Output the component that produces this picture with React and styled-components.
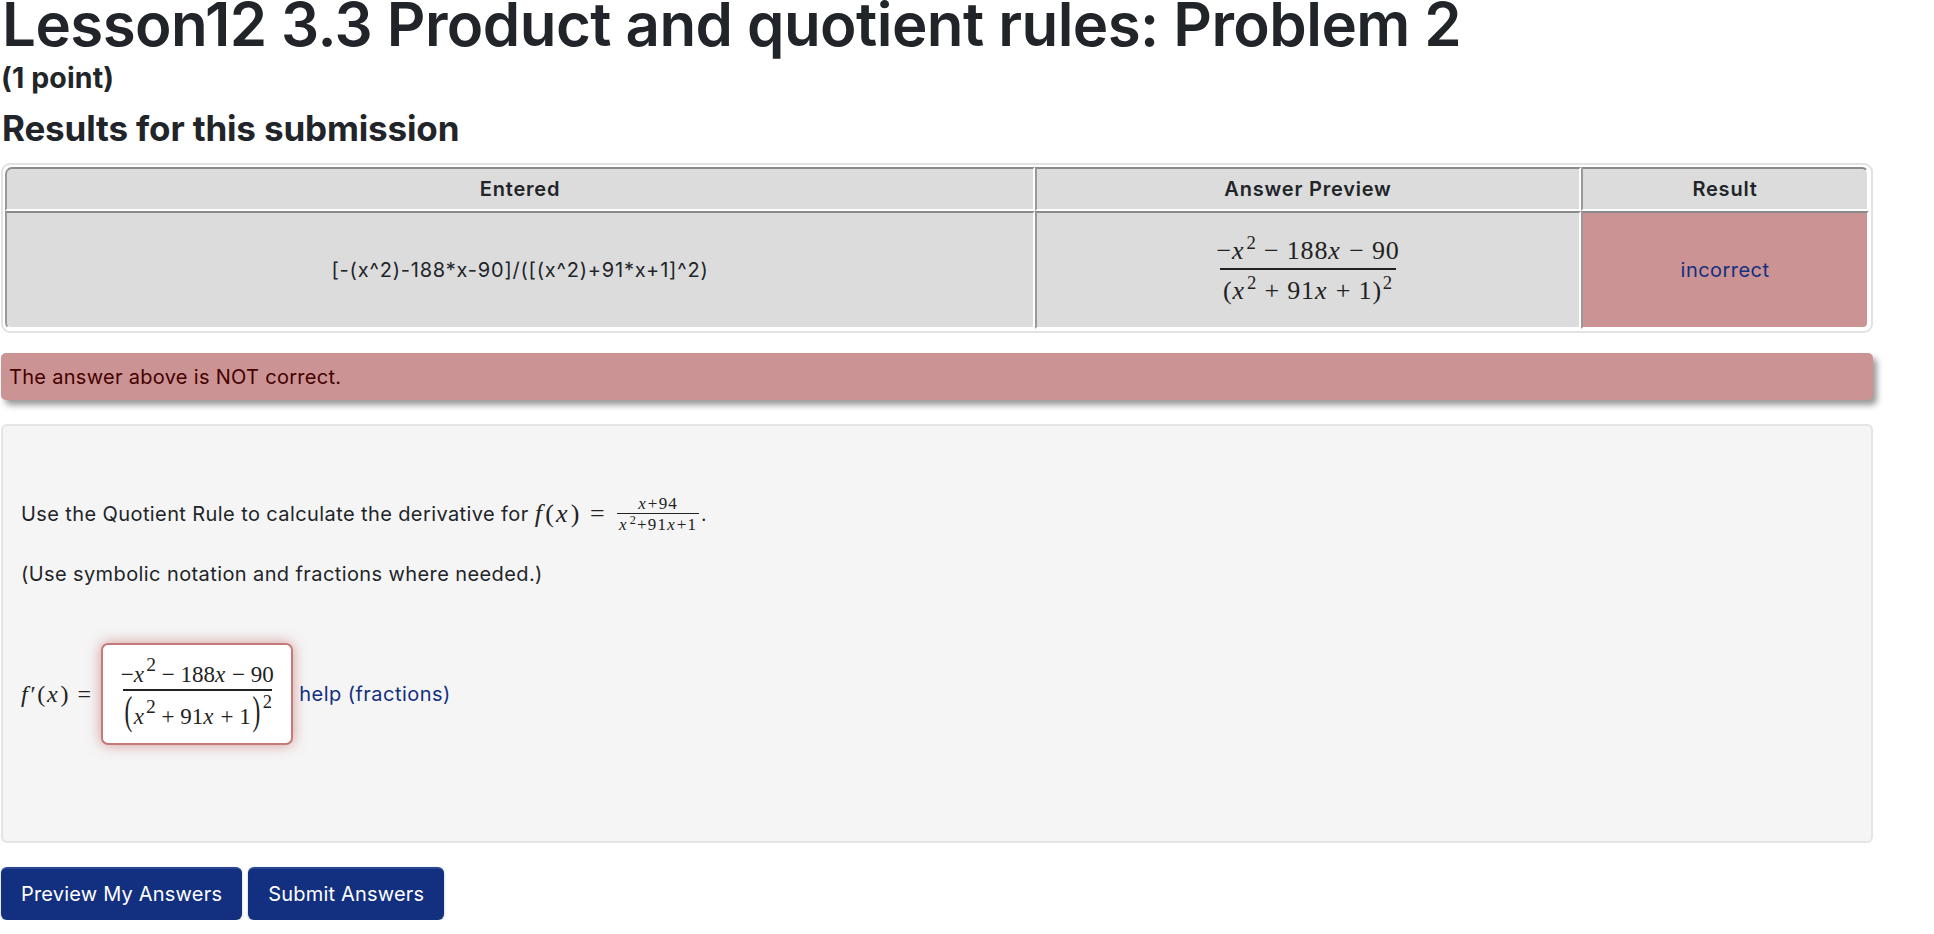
import React from 'react';
import styled, { createGlobalStyle } from 'styled-components';

const Global = createGlobalStyle`
  html, body { margin: 0; padding: 0; background: #fff; overflow: hidden; }
  body { font-family: Inter, "Liberation Sans", sans-serif; color: #212529; font-size: 20px; }
  * { box-sizing: border-box; }
`;
const Page = styled.div`
  width: 1876px;
  padding-left: 1px;
`;
const Title = styled.h1`
  margin: 0 0 0 1px;
  font-size: 60px;
  line-height: 49px;
  font-weight: 600;
  letter-spacing: -0.55px;
  white-space: nowrap;
`;
const Points = styled.div`
  margin: 13px 0 0 0;
  font-size: 28.5px;
  line-height: 32px;
  font-weight: 700;
  letter-spacing: 0.15px;
`;
const ResultsHeading = styled.h2`
  margin: 13px 0 0 1px;
  font-size: 35px;
  line-height: 42px;
  font-weight: 700;
  letter-spacing: -0.15px;
`;
const TableFrame = styled.div`
  margin-top: 14px;
  width: 1872px;
  height: 170px;
  border: 2px solid #e2e2e2;
  border-radius: 9px;
  padding: 2px;
  background: #fff;
`;
const Table = styled.table`
  width: 100%;
  height: 100%;
  border-collapse: separate;
  border-spacing: 0;
  table-layout: fixed;
`;
const Cell = styled.td`
  padding: 0;
  text-align: center;
  background: ${p => (p.$bad ? '#cb9393' : '#dcdcdc')};
  border-top: 2px solid #8a8a8a;
  border-left: 2px solid #999;
  border-right: 2px solid #fff;
  border-bottom: 2px solid #fff;
  font-size: 20px;
  letter-spacing: ${p => (p.$bad ? 0.5 : 0.8)}px;
  vertical-align: middle;
  &:first-child { border-bottom-left-radius: 6px; }
  &:last-child { border-bottom-right-radius: 6px; }
`;
const HeadCell = styled(Cell).attrs({ as: 'th' })`
  height: 44px;
  font-weight: 600;
  &:first-child { border-top-left-radius: 7px; border-bottom-left-radius: 0; }
  &:last-child { border-top-right-radius: 7px; border-bottom-right-radius: 0; }
`;
const Link = styled.a`
  color: #132f80;
  text-decoration: none;
  letter-spacing: 0.45px;
`;
const Alert = styled.div`
  margin-top: 20px;
  width: 1872px;
  height: 47px;
  background: #cb9393;
  color: #400;
  border-radius: 5px;
  box-shadow: 4px 5px 6px #999;
  padding-left: 8px;
  display: flex;
  align-items: center;
  font-size: 20px;
  letter-spacing: 0.3px;
`;
const ProblemBox = styled.div`
  margin-top: 24px;
  width: 1872px;
  height: 419px;
  border: 2px solid #e4e4e4;
  border-radius: 6px;
  background: #f5f5f5;
  padding: 63px 0 0 18px;
  font-size: 20px;
  letter-spacing: 0.4px;
`;
const Statement = styled.div`
  height: 50px;
  display: flex;
  align-items: center;
  white-space: pre;
`;
const Hint = styled.div`
  margin-top: 20px;
  height: 30px;
  line-height: 30px;
`;
const AnswerRow = styled.div`
  margin-top: 54px;
  display: flex;
  align-items: center;
`;
const Math = styled.span`
  font-family: "Liberation Serif", "Times New Roman", serif;
  display: inline-flex;
  align-items: center;
  white-space: pre;
  color: #222;
  font-size: ${p => p.$size || 25}px;
  letter-spacing: ${p => p.$track || 0}px;
`;
const V = styled.i`
  font-style: italic;
  padding-right: 0.05em;
`;
const Sup = styled.sup`
  font-size: ${p => p.$scale || 0.72}em;
  line-height: 0;
  vertical-align: baseline;
  position: relative;
  top: ${p => p.$top || -0.52}em;
  margin-left: 1px;
`;
const Frac = styled.span`
  display: inline-flex;
  flex-direction: column;
  align-items: center;
  margin: 0 ${p => p.$gap || 0}px;
`;
const Numer = styled.span`
  display: block;
  padding: ${p => p.$pt || 0}px ${p => p.$pad ?? 3}px 0;
  line-height: ${p => p.$lh || 30}px;
  box-sizing: content-box;
  height: ${p => p.$lh || 30}px;
`;
const Denom = styled(Numer)`
  border-top: ${p => p.$rule || 2}px solid #222;
`;
const AnswerBox = styled.span`
  display: inline-flex;
  align-items: center;
  justify-content: center;
  width: 192px;
  height: 102px;
  margin: 0 6px 0 1px;
  background: #fff;
  border: 2px solid #c57a7a;
  border-radius: 7px;
  box-shadow: 0 0 14px rgba(190, 90, 90, 0.6);
`;
const Paren = styled.span`
  font-size: 1.7em;
  font-weight: 300;
  line-height: 0;
  display: inline-block;
  transform: scaleX(0.6);
  margin: 0 -1px;
`;
const Buttons = styled.div`
  margin-top: 24px;
  display: flex;
  gap: 6px;
`;
const Button = styled.button`
  height: 53px;
  padding: 0 20px 2px;
  background: #12307f;
  border: 0;
  border-top: 2px solid #2a4794;
  border-radius: 6px;
  box-shadow: 0 1px 3px rgba(0, 0, 0, 0.25);
  color: #fff;
  font-family: inherit;
  font-size: 20px;
  letter-spacing: 0.2px;
`;

export default function App() {
  return (
    <Page>
      <Global />
      <Title>Lesson12 3.3 Product and quotient rules: Problem 2</Title>
      <Points>(1 point)</Points>
      <ResultsHeading>Results for this submission</ResultsHeading>
      <TableFrame>
        <Table>
          <colgroup>
            <col style={{ width: 1030 }} />
            <col style={{ width: 546 }} />
            <col />
          </colgroup>
          <thead>
            <tr>
              <HeadCell>Entered</HeadCell>
              <HeadCell>Answer Preview</HeadCell>
              <HeadCell>Result</HeadCell>
            </tr>
          </thead>
          <tbody>
            <tr>
              <Cell>[-(x^2)-188*x-90]/([(x^2)+91*x+1]^2)</Cell>
              <Cell>
                <Math $size={26} $track={0.8}>
                  <Frac>
                    <Numer $pad={3} $pt={6} $lh={34}>−<V>x</V><Sup>2</Sup> − 188<V>x</V> − 90</Numer>
                    <Denom $pad={3} $lh={42}>(<V>x</V><Sup>2</Sup> + 91<V>x</V> + 1)<Sup>2</Sup></Denom>
                  </Frac>
                </Math>
              </Cell>
              <Cell $bad><Link>incorrect</Link></Cell>
            </tr>
          </tbody>
        </Table>
      </TableFrame>
      <Alert>The answer above is NOT correct.</Alert>
      <ProblemBox>
        <Statement>
          Use the Quotient Rule to calculate the derivative for{' '}
          <Math $size={26} $track={2}><V>f</V>(<V>x</V>) = </Math>
          <Math $size={17} $track={1.2}>
            <Frac $gap={2}>
              <Numer $pad={2} $pt={1} $lh={19}><V>x</V>+94</Numer>
              <Denom $pad={2} $lh={21} $rule={1.5}><V>x</V><Sup>2</Sup>+91<V>x</V>+1</Denom>
            </Frac>
          </Math>
          <Math $size={20}>.</Math>
        </Statement>
        <Hint>(Use symbolic notation and fractions where needed.)</Hint>
        <AnswerRow>
          <Math $size={24} $track={1.6}><V>f</V>′(<V>x</V>) = </Math>
          <AnswerBox>
            <Math $size={23}>
              <Frac>
                <Numer $pad={0} $pt={16} $lh={28}>−<V>x</V><Sup $scale={0.85} $top={-0.58}>2</Sup> − 188<V>x</V> − 90</Numer>
                <Denom $pad={0} $lh={52}><Paren>(</Paren><V>x</V><Sup $scale={0.85} $top={-0.58}>2</Sup> + 91<V>x</V> + 1<Paren>)</Paren><Sup $scale={0.8} $top={-0.85}>2</Sup></Denom>
              </Frac>
            </Math>
          </AnswerBox>
          <Link>help (fractions)</Link>
        </AnswerRow>
      </ProblemBox>
      <Buttons>
        <Button>Preview My Answers</Button>
        <Button>Submit Answers</Button>
      </Buttons>
    </Page>
  );
}
